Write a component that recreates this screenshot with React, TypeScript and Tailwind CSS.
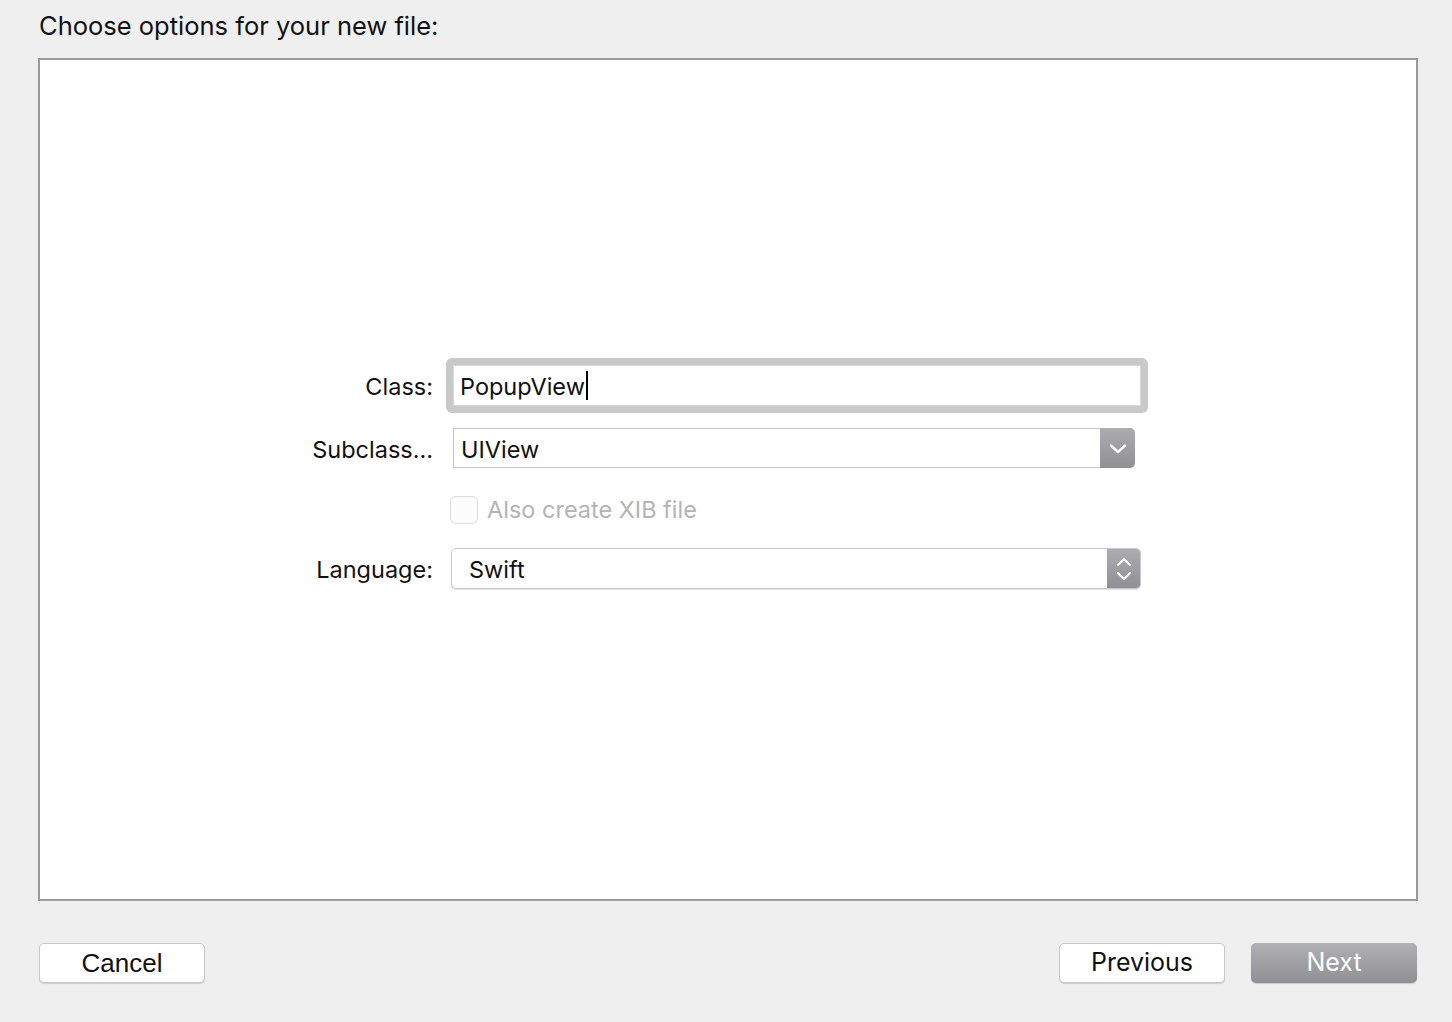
const ChevronDown = ({ className = "" }: { className?: string }) => (
  <svg viewBox="0 0 18 11" className={className} fill="none" stroke="currentColor" strokeWidth="2.4" strokeLinecap="round" strokeLinejoin="round">
    <path d="M2 2.5l7 6.5 7-6.5" />
  </svg>
);

const Stepper = () => (
  <svg viewBox="0 0 16 26" className="w-[16px] h-[26px]" fill="none" stroke="currentColor" strokeWidth="2.2" strokeLinecap="round" strokeLinejoin="round">
    <path d="M2 9l6-6 6 6" />
    <path d="M2 17l6 6 6-6" />
  </svg>
);

const Label = ({ children }: { children: React.ReactNode }) => (
  <div className="ml-[143px] w-[250px] text-right text-[23.5px] text-[#111] pt-[3px]">{children}</div>
);

const App = () => {
  return (
    <div className="w-[1452px] h-[1022px] bg-[#efefef] overflow-hidden font-['Inter','Noto_Sans',sans-serif] text-[#111]">
      <div className="h-[58px] pl-[39px] pt-[10px] text-[25.5px] leading-[32px]">Choose options for your new file:</div>

      <div className="ml-[38px] w-[1380px] h-[843px] bg-white border-2 border-[#9a9a9a] pt-[298px] flex flex-col">
        {/* Class */}
        <div className="flex items-center h-[55px]">
          <Label>Class:</Label>
          <div className="ml-[13px] w-[702px] h-[55px] rounded-[6px] bg-[#c9c9c9] p-[7px]">
            <div className="h-full bg-white border border-[#dadada] flex items-center pl-[6px] pt-[3px] text-[23.5px]">
              PopupView
              <span className="inline-block w-[2px] h-[29px] bg-black ml-[1px] -mt-[3px]" />
            </div>
          </div>
        </div>

        {/* Subclass */}
        <div className="flex items-center h-[40px] mt-[15px]">
          <Label>Subclass…</Label>
          <div className="ml-[20px] w-[682px] h-[40px] flex">
            <div className="flex-1 border border-[#c6c6c6] border-r-0 flex items-center pl-[7px] pt-[4px] text-[23.5px] bg-white">UIView</div>
            <div className="w-[35px] rounded-r-[5px] bg-gradient-to-b from-[#acacb1] to-[#8f8f94] flex items-center justify-center text-white">
              <ChevronDown className="w-[18px] h-[11px]" />
            </div>
          </div>
        </div>

        {/* Checkbox */}
        <div className="flex items-center h-[28px] mt-[28px]">
          <div className="ml-[410px] w-[28px] h-[28px] rounded-[6px] border border-[#dcdcdc] bg-[#fcfcfc]" />
          <span className="ml-[9px] text-[23.5px] text-[#b4b4b4]">Also create XIB file</span>
        </div>

        {/* Language */}
        <div className="flex items-center h-[41px] mt-[24px]">
          <Label>Language:</Label>
          <div className="ml-[18px] w-[690px] h-[41px] flex rounded-[5px] border border-[#c9c9c9] shadow-[0_1px_1px_rgba(0,0,0,0.12)] bg-white overflow-hidden">
            <div className="flex-1 flex items-center pl-[17px] pt-[2px] text-[23.5px]">Swift</div>
            <div className="w-[33px] bg-gradient-to-b from-[#acacb1] to-[#8f8f94] flex items-center justify-center text-white">
              <Stepper />
            </div>
          </div>
        </div>
      </div>

      <div className="flex items-center pl-[39px] pr-[35px] mt-[42px]">
        <button className="w-[166px] h-[40px] rounded-[5px] bg-white border border-[#c8c8c8] shadow-[0_1px_1px_rgba(0,0,0,0.15)] text-[26px] text-[#111] font-['Liberation_Sans',sans-serif]">
          Cancel
        </button>
        <div className="flex-1" />
        <button className="w-[166px] h-[40px] rounded-[5px] bg-white border border-[#c8c8c8] shadow-[0_1px_1px_rgba(0,0,0,0.15)] text-[25px] text-[#111]">
          Previous
        </button>
        <button className="ml-[26px] w-[166px] h-[40px] rounded-[5px] bg-gradient-to-b from-[#b1b1b5] to-[#8f8f94] shadow-[0_1px_1px_rgba(0,0,0,0.15)] text-[25px] text-white">
          Next
        </button>
      </div>
    </div>
  );
};

export default App;
